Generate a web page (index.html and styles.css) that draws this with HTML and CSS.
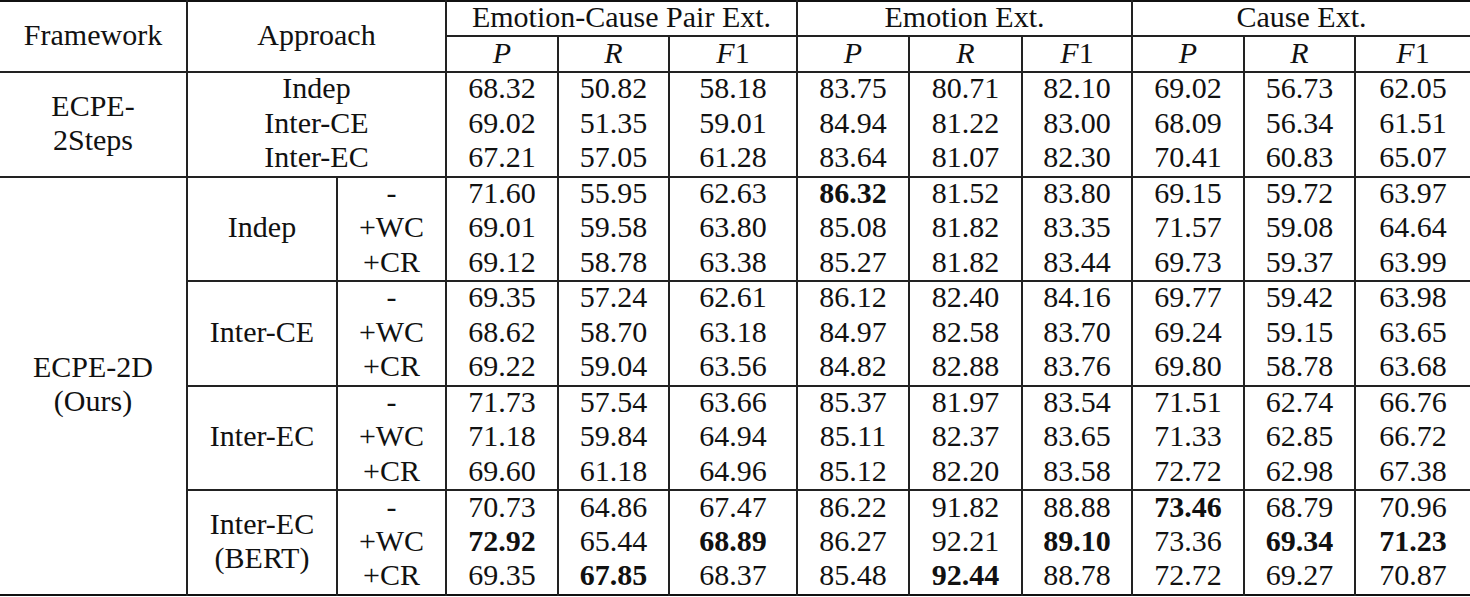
FILE: index.html
```html
<!DOCTYPE html>
<html lang="en">
<head>
  <meta charset="UTF-8">
  <meta name="viewport" content="width=device-width, initial-scale=1.0">
  <title>ECPE Results</title>
  <link rel="stylesheet" href="styles.css">
</head>
<body>
  <table class="results">
    <colgroup>
      <col style="width: 187px">
      <col style="width: 150px">
      <col style="width: 109px">
      <col style="width: 112px">
      <col style="width: 111px">
      <col style="width: 128px">
      <col style="width: 112px">
      <col style="width: 113px">
      <col style="width: 110px">
      <col style="width: 112px">
      <col style="width: 111px">
      <col style="width: 115px">
    </colgroup>
    <thead>
      <tr class="head-top">
        <th rowspan="2" class="fw">Framework</th>
        <th rowspan="2" colspan="2">Approach</th>
        <th colspan="3" class="group">Emotion-Cause Pair Ext.</th>
        <th colspan="3" class="group">Emotion Ext.</th>
        <th colspan="3" class="group">Cause Ext.</th>
      </tr>
      <tr class="head-sub">
        <th><i>P</i></th><th><i>R</i></th><th><i>F</i>1</th>
        <th><i>P</i></th><th><i>R</i></th><th><i>F</i>1</th>
        <th><i>P</i></th><th><i>R</i></th><th><i>F</i>1</th>
      </tr>
    </thead>
    <tbody>
      <!-- ECPE-2Steps -->
      <tr>
        <td rowspan="3" class="fw">ECPE-<br>2Steps</td>
        <td colspan="2">Indep</td>
        <td>68.32</td><td>50.82</td><td>58.18</td>
        <td>83.75</td><td>80.71</td><td>82.10</td>
        <td>69.02</td><td>56.73</td><td>62.05</td>
      </tr>
      <tr>
        <td colspan="2">Inter-CE</td>
        <td>69.02</td><td>51.35</td><td>59.01</td>
        <td>84.94</td><td>81.22</td><td>83.00</td>
        <td>68.09</td><td>56.34</td><td>61.51</td>
      </tr>
      <tr>
        <td colspan="2">Inter-EC</td>
        <td>67.21</td><td>57.05</td><td>61.28</td>
        <td>83.64</td><td>81.07</td><td>82.30</td>
        <td>70.41</td><td>60.83</td><td>65.07</td>
      </tr>

      <!-- ECPE-2D: Indep -->
      <tr class="group-start">
        <td rowspan="12" class="fw">ECPE-2D<br>(Ours)</td>
        <td rowspan="3">Indep</td>
        <td>-</td>
        <td>71.60</td><td>55.95</td><td>62.63</td>
        <td><b>86.32</b></td><td>81.52</td><td>83.80</td>
        <td>69.15</td><td>59.72</td><td>63.97</td>
      </tr>
      <tr>
        <td>+WC</td>
        <td>69.01</td><td>59.58</td><td>63.80</td>
        <td>85.08</td><td>81.82</td><td>83.35</td>
        <td>71.57</td><td>59.08</td><td>64.64</td>
      </tr>
      <tr>
        <td>+CR</td>
        <td>69.12</td><td>58.78</td><td>63.38</td>
        <td>85.27</td><td>81.82</td><td>83.44</td>
        <td>69.73</td><td>59.37</td><td>63.99</td>
      </tr>

      <!-- ECPE-2D: Inter-CE -->
      <tr class="group-start">
        <td rowspan="3">Inter-CE</td>
        <td>-</td>
        <td>69.35</td><td>57.24</td><td>62.61</td>
        <td>86.12</td><td>82.40</td><td>84.16</td>
        <td>69.77</td><td>59.42</td><td>63.98</td>
      </tr>
      <tr>
        <td>+WC</td>
        <td>68.62</td><td>58.70</td><td>63.18</td>
        <td>84.97</td><td>82.58</td><td>83.70</td>
        <td>69.24</td><td>59.15</td><td>63.65</td>
      </tr>
      <tr>
        <td>+CR</td>
        <td>69.22</td><td>59.04</td><td>63.56</td>
        <td>84.82</td><td>82.88</td><td>83.76</td>
        <td>69.80</td><td>58.78</td><td>63.68</td>
      </tr>

      <!-- ECPE-2D: Inter-EC -->
      <tr class="group-start">
        <td rowspan="3">Inter-EC</td>
        <td>-</td>
        <td>71.73</td><td>57.54</td><td>63.66</td>
        <td>85.37</td><td>81.97</td><td>83.54</td>
        <td>71.51</td><td>62.74</td><td>66.76</td>
      </tr>
      <tr>
        <td>+WC</td>
        <td>71.18</td><td>59.84</td><td>64.94</td>
        <td>85.11</td><td>82.37</td><td>83.65</td>
        <td>71.33</td><td>62.85</td><td>66.72</td>
      </tr>
      <tr>
        <td>+CR</td>
        <td>69.60</td><td>61.18</td><td>64.96</td>
        <td>85.12</td><td>82.20</td><td>83.58</td>
        <td>72.72</td><td>62.98</td><td>67.38</td>
      </tr>

      <!-- ECPE-2D: Inter-EC (BERT) -->
      <tr class="group-start">
        <td rowspan="3">Inter-EC<br>(BERT)</td>
        <td>-</td>
        <td>70.73</td><td>64.86</td><td>67.47</td>
        <td>86.22</td><td>91.82</td><td>88.88</td>
        <td><b>73.46</b></td><td>68.79</td><td>70.96</td>
      </tr>
      <tr>
        <td>+WC</td>
        <td><b>72.92</b></td><td>65.44</td><td><b>68.89</b></td>
        <td>86.27</td><td>92.21</td><td><b>89.10</b></td>
        <td>73.36</td><td><b>69.34</b></td><td><b>71.23</b></td>
      </tr>
      <tr>
        <td>+CR</td>
        <td>69.35</td><td><b>67.85</b></td><td>68.37</td>
        <td>85.48</td><td><b>92.44</b></td><td>88.78</td>
        <td>72.72</td><td>69.27</td><td>70.87</td>
      </tr>
    </tbody>
  </table>
</body>
</html>
```

FILE: styles.css
```css
body {
  margin: 0;
  background-color: #fff;
  color: #111;
  font-family: "Liberation Serif", "DejaVu Serif", serif;
}

/* Results table */
.results {
  width: 1470px;
  table-layout: fixed;
  border-collapse: collapse;
  border-top: 2px solid #111;
  border-bottom: 2px solid #111;
  font-family: "Liberation Serif", "DejaVu Serif", serif;
  font-size: 30px;
  line-height: 30px;
}

.results th,
.results td {
  padding: 0 0 3px;
  text-align: center;
  vertical-align: middle;
  font-weight: normal;
  border-left: 2px solid #222;
  border-right: 2px solid #222;
  white-space: nowrap;
}

.results th {
  line-height: 28px;
}

.results .fw {
  border-left: none;
}

.results td[rowspan] {
  line-height: 34px;
}

.results tr > :last-child {
  border-right: none;
}

.results b {
  font-weight: bold;
}

/* Header */
.head-top {
  height: 35px;
}

.head-top th {
  border-bottom: 2px solid #222;
}

.head-sub {
  height: 36px;
}

.head-sub th {
  border-bottom: 2px solid #222;
}

.head-sub i {
  font-style: italic;
}

/* Body rows */
.results tbody tr {
  height: 34.85px;
}

.group-start td {
  border-top: 2px solid #222;
}
```
